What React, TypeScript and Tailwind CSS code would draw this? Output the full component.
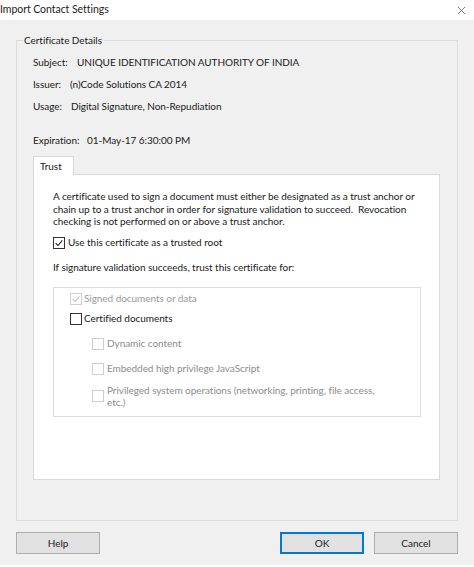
import { X } from 'lucide-react';

type BoxProps = {
  checked?: boolean;
  disabled?: boolean;
};

function CheckBox({ checked = false, disabled = false }: BoxProps) {
  return (
    <span
      className={`flex h-[12px] w-[12px] shrink-0 items-center justify-center border bg-white ${
        disabled ? 'border-[#cfcfcf]' : 'border-[#333333]'
      }`}
    >
      {checked && (
        <svg viewBox="0 0 12 12" className="h-[10px] w-[10px]">
          <path
            d="M2 6.2 L4.8 9 L10 2.8"
            fill="none"
            stroke={disabled ? '#c4c4c4' : '#222222'}
            strokeWidth="1.3"
          />
        </svg>
      )}
    </span>
  );
}

const details = [
  { label: 'Subject:', value: 'UNIQUE IDENTIFICATION AUTHORITY OF INDIA', width: 'w-[44px]' },
  { label: 'Issuer:', value: '(n)Code Solutions CA 2014', width: 'w-[37px]' },
  { label: 'Usage:', value: 'Digital Signature, Non-Repudiation', width: 'w-[38px]' },
];

export default function App() {
  return (
    <div className="flex h-[567px] w-[474px] flex-col bg-white font-['Lato',sans-serif] text-[10px] tracking-[-0.05px] text-[#1a1a1a]">
      {/* Title bar */}
      <div className="flex h-[20px] shrink-0 items-center justify-between pl-[0px] pr-[6px]">
        <span className="text-[10.5px] text-[#222]">Import Contact Settings</span>
        <X className="h-[13px] w-[13px] text-[#333]" strokeWidth={1.2} />
      </div>

      {/* Dialog body */}
      <div className="flex flex-1 flex-col bg-[#f0f0f0] px-[16px] pt-[20px]">
        {/* Certificate Details group */}
        <div className="relative flex h-[481px] w-[442px] flex-col border border-[#dcdcdc] pl-[16px] pt-[10px]">
          <span className="absolute left-[6px] top-[-8px] bg-[#f0f0f0] px-[1px]">Certificate Details</span>

          {details.map((d) => (
            <div key={d.label} className="flex h-[22px] items-center">
              <span className={d.width}>{d.label}</span>
              <span>{d.value}</span>
            </div>
          ))}

          <div className="mt-[12px] flex h-[22px] items-center">
            <span className="w-[54px]">Expiration:</span>
            <span>01-May-17 6:30:00 PM</span>
          </div>

          {/* Tab */}
          <div className="mt-[5px] flex">
            <div className="relative z-10 -mb-px flex h-[19px] w-[41px] items-center border border-b-0 border-[#d9d9d9] bg-white pl-[6px]">
              Trust
            </div>
          </div>

          {/* Tab panel */}
          <div className="flex h-[306px] w-[407px] flex-col border border-[#d9d9d9] bg-white pl-[19px] pt-[15px]">
            <p className="whitespace-nowrap leading-[12.5px]">
              A certificate used to sign a document must either be designated as a trust anchor or
              <br />
              chain up to a trust anchor in order for signature validation to succeed.&nbsp; Revocation
              <br />
              checking is not performed on or above a trust anchor.
            </p>

            <label className="mt-[8px] flex h-[14px] items-center gap-[3px]">
              <CheckBox checked />
              <span>Use this certificate as a trusted root</span>
            </label>

            <p className="mt-[10px] leading-[14px]">If signature validation succeeds, trust this certificate for:</p>

            {/* Trust options */}
            <div className="mt-[13px] flex h-[130px] w-[368px] flex-col border border-[#dcdcdc] pl-[16px] pt-[3px]">
              <label className="flex h-[16px] items-center gap-[2px] text-[#999]">
                <CheckBox checked disabled />
                <span>Signed documents or data</span>
              </label>
              <label className="mt-[4px] flex h-[16px] items-center gap-[2px]">
                <CheckBox />
                <span>Certified documents</span>
              </label>
              <div className="flex flex-col pl-[22px] text-[#8c8c8c]">
                <label className="mt-[9px] flex h-[16px] items-center gap-[3px]">
                  <CheckBox disabled />
                  <span>Dynamic content</span>
                </label>
                <label className="mt-[9px] flex h-[16px] items-center gap-[3px]">
                  <CheckBox disabled />
                  <span>Embedded high privilege JavaScript</span>
                </label>
                <label className="mt-[7px] flex items-center gap-[3px]">
                  <CheckBox disabled />
                  <span className="whitespace-nowrap leading-[12px]">
                    Privileged system operations (networking, printing, file access,
                    <br />
                    etc.)
                  </span>
                </label>
              </div>
            </div>
          </div>
        </div>

        {/* Buttons */}
        <div className="mt-[11px] flex items-center">
          <button className="h-[22px] w-[84px] border border-[#adadad] bg-[#e1e1e1]">Help</button>
          <div className="flex-1" />
          <button className="h-[22px] w-[84px] border-2 border-[#0078d7] bg-[#e1e1e1]">OK</button>
          <button className="ml-[10px] h-[22px] w-[84px] border border-[#adadad] bg-[#e1e1e1]">Cancel</button>
        </div>
      </div>
      <div className="h-[2px] shrink-0 bg-white" />
    </div>
  );
}
